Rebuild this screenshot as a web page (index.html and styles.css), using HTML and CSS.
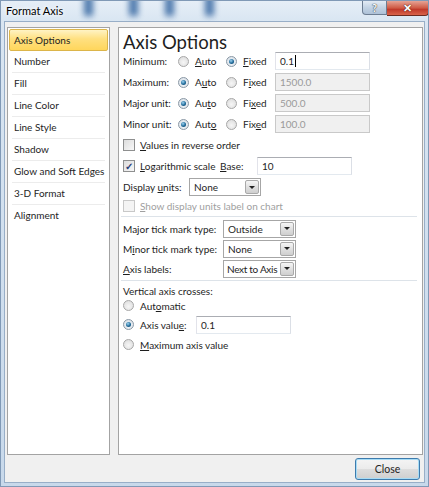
FILE: index.html
```html
<!DOCTYPE html>
<html lang="en">
<head>
    <meta charset="UTF-8">
    <title>Format Axis</title>
    <link rel="stylesheet" href="styles.css">
</head>
<body>
    <div class="window">
        <div class="titlebar">
            <span class="blob b1"></span>
            <span class="blob b2"></span>
            <span class="blob b3"></span>
            <span class="blob b4"></span>
            <span class="title">Format Axis</span>
            <div class="caption-btns">
                <span class="help-btn">?</span>
                <span class="close-x">✕</span>
            </div>
        </div>

        <div class="client">
            <div class="main">
                <ul class="nav">
                    <li class="sel">Axis Options</li>
                    <li>Number</li>
                    <li>Fill</li>
                    <li>Line Color</li>
                    <li>Line Style</li>
                    <li>Shadow</li>
                    <li>Glow and Soft Edges</li>
                    <li>3-D Format</li>
                    <li class="last">Alignment</li>
                </ul>

                <div class="panel">
                    <h2>Axis Options</h2>

                    <div class="row">
                        <span class="lbl">Minimum:</span>
                        <span class="radio"></span><span class="opt-auto"><u>A</u>uto</span>
                        <span class="radio on"></span><span class="opt-fixed"><u>F</u>ixed</span>
                        <span class="field">0.1<span class="caret"></span></span>
                    </div>
                    <div class="row">
                        <span class="lbl">Maximum:</span>
                        <span class="radio on"></span><span class="opt-auto">A<u>u</u>to</span>
                        <span class="radio"></span><span class="opt-fixed">F<u>i</u>xed</span>
                        <span class="field off">1500.0</span>
                    </div>
                    <div class="row">
                        <span class="lbl">Major unit:</span>
                        <span class="radio on"></span><span class="opt-auto">Au<u>t</u>o</span>
                        <span class="radio"></span><span class="opt-fixed">Fi<u>x</u>ed</span>
                        <span class="field off">500.0</span>
                    </div>
                    <div class="row">
                        <span class="lbl">Minor unit:</span>
                        <span class="radio on"></span><span class="opt-auto">Aut<u>o</u></span>
                        <span class="radio"></span><span class="opt-fixed">Fix<u>e</u>d</span>
                        <span class="field off">100.0</span>
                    </div>

                    <div class="row">
                        <span class="check"></span>
                        <span><u>V</u>alues in reverse order</span>
                    </div>
                    <div class="row">
                        <span class="check on">✓</span>
                        <span class="log-text"><u>L</u>ogarithmic scale</span>
                        <span class="base-lbl"><u>B</u>ase:</span>
                        <span class="field">10</span>
                    </div>
                    <div class="row">
                        <span class="units-lbl">Display <u>u</u>nits:</span>
                        <span class="select units"><span class="val">None</span><span class="arrow"></span></span>
                    </div>
                    <div class="row short disabled">
                        <span class="check"></span>
                        <span><u>S</u>how display units label on chart</span>
                    </div>

                    <div class="sep"></div>

                    <div class="row tick">
                        <span class="tick-lbl">Ma<u>j</u>or tick mark type:</span>
                        <span class="select"><span class="val">Outside</span><span class="arrow"></span></span>
                    </div>
                    <div class="row tick">
                        <span class="tick-lbl">M<u>i</u>nor tick mark type:</span>
                        <span class="select"><span class="val">None</span><span class="arrow"></span></span>
                    </div>
                    <div class="row tick">
                        <span class="tick-lbl"><u>A</u>xis labels:</span>
                        <span class="select"><span class="val tight">Next to Axis</span><span class="arrow"></span></span>
                    </div>

                    <div class="sep"></div>

                    <div class="row cross-head">Vertical axis crosses:</div>
                    <div class="row cross-auto">
                        <span class="radio"></span>
                        <span>Aut<u>o</u>matic</span>
                    </div>
                    <div class="row cross-val">
                        <span class="radio on"></span>
                        <span class="axisval-lbl">Axis valu<u>e</u>:</span>
                        <span class="field">0.1</span>
                    </div>
                    <div class="row cross-max">
                        <span class="radio"></span>
                        <span><u>M</u>aximum axis value</span>
                    </div>
                </div>
            </div>

            <div class="footer">
                <button class="btn">Close</button>
            </div>
        </div>
    </div>
</body>
</html>
```

FILE: styles.css
```css
body {
    margin: 0;
    padding: 0;
    font-family: Lato, "Open Sans", sans-serif;
    font-size: 10px;
    color: #1e1e1e;
    background-color: #d3e1ef;
}

.window {
    width: 429px;
    height: 487px;
    box-sizing: border-box;
    border: 1px solid #8099b6;
    padding: 0 3px 3px 3px;
    background: linear-gradient(#dae6f2, #c8d9eb);
    overflow: hidden;
}

/* Title bar */
.titlebar {
    height: 20px;
    display: flex;
    align-items: flex-start;
    position: relative;
    margin: 0 -3px;
    padding: 0 3px;
    background: linear-gradient(#e6eef7, #d9e6f2);
    overflow: hidden;
}

.blob {
    position: absolute;
    top: -6px;
    width: 9px;
    height: 21px;
    background-color: #30629e;
    filter: blur(3px);
    opacity: 0.85;
}

.b1 { left: 83px; }
.b2 { left: 128px; }
.b3 { left: 164px; }
.b4 { left: 204px; }

.title {
    position: relative;
    padding-left: 2px;
    line-height: 20px;
    font-size: 11px;
    color: #000;
    text-shadow: 0 0 4px #fff, 0 0 4px #fff;
}

.caption-btns {
    margin-left: auto;
    margin-right: -4px;
    display: flex;
    position: relative;
}

.help-btn {
    width: 25px;
    height: 14px;
    box-sizing: border-box;
    border: 1px solid #6c7d92;
    border-top: none;
    border-radius: 0 0 0 4px;
    background: linear-gradient(#e3ebf4, #c3d3e4 50%, #adc1d7);
    color: #fff;
    font-size: 11px;
    font-weight: bold;
    line-height: 13px;
    text-align: center;
    text-shadow: 0 0 1px #333, 0 0 1px #333;
}

.close-x {
    width: 42px;
    height: 15px;
    box-sizing: border-box;
    border: 1px solid #6b2b20;
    border-top: none;
    border-left: none;
    border-radius: 0 0 4px 0;
    background: linear-gradient(#e6a395, #cf5a44 50%, #c0392a 60%, #d8634a);
    color: #fff;
    font-size: 11px;
    font-weight: bold;
    line-height: 14px;
    text-align: center;
    text-shadow: 0 0 1px #4a1008, 0 0 1px #4a1008;
}

/* Client area */
.client {
    height: 462px;
    box-sizing: border-box;
    border: 1px solid #98aec7;
    padding: 5px 1px 0 2px;
    background-color: #f0f0f0;
}

.main {
    display: grid;
    grid-template-columns: 103px 305px;
    gap: 8px;
    height: 428px;
}

/* Category list */
.nav {
    list-style: none;
    margin: 0;
    padding: 1px;
    border: 1px solid #a3a3a3;
    background-color: #fff;
}

.nav li {
    height: 22px;
    box-sizing: border-box;
    margin: 0 3px;
    padding-left: 2px;
    line-height: 21px;
    border-bottom: 1px solid #ececec;
    white-space: nowrap;
}

.nav li.last {
    border-bottom: none;
}

.nav li.sel {
    margin: 0;
    padding-left: 4px;
    line-height: 20px;
    border: 1px solid #dcb54a;
    border-radius: 2px;
    background: linear-gradient(#fff3c4, #ffe080 45%, #ffd65c);
}

/* Options panel */
.panel {
    border: 1px solid #a3a3a3;
    padding-left: 4px;
    background-color: #fff;
}

.panel h2 {
    margin: 0;
    height: 22.5px;
    box-sizing: border-box;
    padding-top: 3px;
    font-size: 18.5px;
    font-weight: normal;
    line-height: 22px;
    color: #1e1e1e;
}

.row {
    display: flex;
    align-items: center;
    height: 21px;
    white-space: nowrap;
}

.row.short { height: 17px; }
.row.tick { height: 20px; }
.row.cross-head { height: 16px; }
.row.cross-auto { height: 14px; }
.row.cross-val { height: 24px; }
.row.cross-max { height: 16px; }

.disabled { color: #a0a0a0; }

.lbl { width: 55px; }
.opt-auto { width: 31px; }
.opt-fixed { width: 32px; }
.log-text { width: 80px; }
.base-lbl { width: 37px; }
.units-lbl { width: 66px; }
.tick-lbl { width: 100px; }
.axisval-lbl { width: 56px; }

u {
    text-decoration: underline;
    text-underline-offset: 1px;
}

.radio {
    width: 11px;
    height: 11px;
    box-sizing: border-box;
    margin-right: 6px;
    border: 1px solid #a7a7a7;
    border-radius: 50%;
    background: radial-gradient(circle at 50% 60%, #f6f6f6, #d9d9d9);
    display: flex;
    align-items: center;
    justify-content: center;
    flex-shrink: 0;
}

.radio.on {
    border-color: #8a98a5;
    background: radial-gradient(circle at 50% 60%, #f4f7fa, #d5dde5);
}

.radio.on::after {
    content: "";
    width: 5px;
    height: 5px;
    border-radius: 50%;
    background: radial-gradient(circle at 40% 35%, #9fd4f2, #1f6a99 55%, #0d3b5f);
}

.check {
    width: 12px;
    height: 12px;
    box-sizing: border-box;
    margin-right: 5px;
    border: 1px solid #8e8f8f;
    background: linear-gradient(135deg, #dcdcdc, #f8f8f8);
    font-size: 10px;
    font-weight: bold;
    line-height: 10px;
    text-align: center;
    color: #2a3f78;
    flex-shrink: 0;
}

.disabled .check {
    border-color: #c8c8c8;
    background: #f4f4f4;
}

.field {
    width: 95px;
    height: 18px;
    box-sizing: border-box;
    border: 1px solid #abadb3;
    border-left-color: #e2e3ea;
    border-right-color: #dbdfe6;
    border-bottom-color: #e3e9ef;
    padding-left: 4px;
    line-height: 16px;
    background-color: #fff;
    display: flex;
    align-items: center;
}

.field.off {
    border-color: #c9c9c9;
    background-color: #f0f0f0;
    color: #9a9a9a;
}

.caret {
    width: 1px;
    height: 12px;
    margin-left: 1px;
    background-color: #000;
}

.select {
    width: 73px;
    height: 18px;
    box-sizing: border-box;
    border: 1px solid #a6a6a6;
    background-color: #fff;
    display: flex;
}

.select.units {
    width: 72px;
}

.select .val {
    flex: 1;
    padding-left: 4px;
    line-height: 16px;
    overflow: hidden;
}

.select .val.tight {
    padding-left: 3px;
    letter-spacing: -0.3px;
}

.select .arrow {
    width: 14px;
    margin: 1px;
    box-sizing: border-box;
    border: 1px solid #a9a9a9;
    border-radius: 2px;
    background: linear-gradient(#f6f6f6, #e0e0e0 50%, #cfcfcf);
    display: flex;
    align-items: center;
    justify-content: center;
    flex-shrink: 0;
}

.select .arrow::after {
    content: "";
    border-left: 3px solid transparent;
    border-right: 3px solid transparent;
    border-top: 3px solid #222;
}

.sep {
    width: 296px;
    height: 1px;
    margin: 1px 0 2px -2px;
    background-color: #dde3e9;
}

/* Footer */
.footer {
    display: flex;
    justify-content: flex-end;
    padding: 3px 3px 0 0;
}

.btn {
    width: 65px;
    height: 22px;
    padding: 0;
    border: 1px solid #3d7bad;
    border-radius: 3px;
    background: linear-gradient(#f4f4f4, #ebebeb 50%, #dddddd 51%, #cfcfcf);
    box-shadow: inset 0 0 0 1px #a7dcf6;
    font-family: Lato, "Open Sans", sans-serif;
    font-size: 10.5px;
    color: #1e1e1e;
}
```
